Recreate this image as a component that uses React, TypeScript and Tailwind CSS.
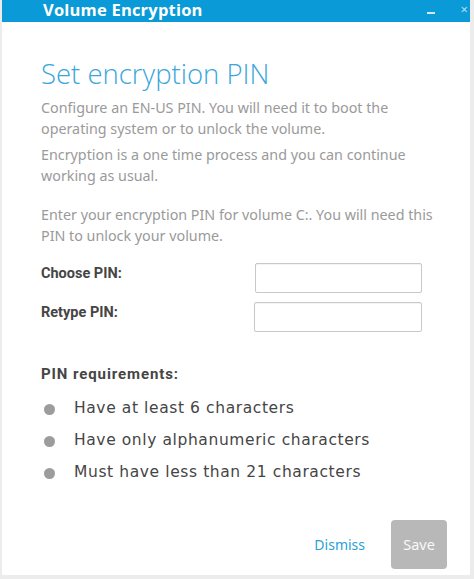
export default function App() {
  const reqs = [
    'Have at least 6 characters',
    'Have only alphanumeric characters',
    'Must have less than 21 characters',
  ];

  return (
    <div className="w-[474px] h-[579px] bg-[#ececec] pl-[2px] pr-[4px] pb-[4px] overflow-hidden">
      <div className="h-full bg-white flex flex-col">
        {/* title bar */}
        <div className="h-[22px] bg-[#0a9ad8] flex items-center pl-[41px] pr-[2px] text-white">
          <span className="text-[16.5px] font-bold font-['Open_Sans',sans-serif] leading-none -mt-[2px] tracking-[0.2px]">
            Volume Encryption
          </span>
          <span className="ml-auto mr-[26px] w-[8px] h-[2px] bg-white/80 mt-[4px]" />
          <span className="text-[13px] leading-none text-white/70 -mt-[4px]">×</span>
        </div>

        <div className="flex-1 flex flex-col pl-[39px] pr-[22px] font-['Noto_Sans',sans-serif]">
          <h1 className="mt-[35px] text-[27.5px] font-light text-[#3aa6dc] leading-[34px] font-['Open_Sans',sans-serif]">
            Set encryption PIN
          </h1>

          <p className="mt-[6px] text-[14.3px] leading-[21px] text-[#9a9a9a]">
            Configure an EN-US PIN. You will need it to boot the operating system or to unlock the volume.
          </p>
          <p className="mt-[5px] text-[14.3px] leading-[21px] text-[#9a9a9a]">
            Encryption is a one time process and you can continue working as usual.
          </p>
          <p className="mt-[18px] text-[14.3px] leading-[21px] text-[#9a9a9a]">
            Enter your encryption PIN for volume C:. You will need this PIN to unlock your volume.
          </p>

          <div className="mt-[17px] flex flex-col gap-[9px] font-['Roboto',sans-serif] text-[14.5px] font-bold text-[#454545]">
            <div className="flex items-center">
              <span className="w-[214px] -mt-[8px]">Choose PIN:</span>
              <div className="w-[167px] h-[30px] border border-[#c8c8c8] rounded-[2px] shadow-[inset_0_1px_1px_rgba(0,0,0,0.05)]" />
            </div>
            <div className="flex items-center">
              <span className="w-[213px] -mt-[8px]">Retype PIN:</span>
              <div className="w-[168px] h-[30px] border border-[#c8c8c8] rounded-[2px] shadow-[inset_0_1px_1px_rgba(0,0,0,0.05)]" />
            </div>
          </div>

          <div className="mt-[31px] font-['Roboto',sans-serif] text-[15px] font-bold text-[#454545] tracking-[0.9px]">
            PIN requirements:
          </div>

          <ul className="mt-[13px] flex flex-col gap-[11px] font-['DejaVu_Sans',sans-serif] text-[15.5px] tracking-[0.6px] text-[#454545]">
            {reqs.map(r => (
              <li key={r} className="flex items-center h-[21px]">
                <span className="ml-[3px] w-[11px] h-[11px] rounded-full bg-[#9c9c9c]" />
                <span className="ml-[19px]">{r}</span>
              </li>
            ))}
          </ul>

          <div className="mt-auto mb-[6px] flex items-center justify-end gap-[26px] pr-[1px]">
            <span className="text-[14px] text-[#2a9fd8] font-['Noto_Sans',sans-serif]">Dismiss</span>
            <div className="w-[56px] h-[49px] rounded-[4px] bg-[#b8b8b8] flex items-center justify-center text-[14.5px] text-white/90">
              Save
            </div>
          </div>
        </div>
      </div>
    </div>
  );
}
